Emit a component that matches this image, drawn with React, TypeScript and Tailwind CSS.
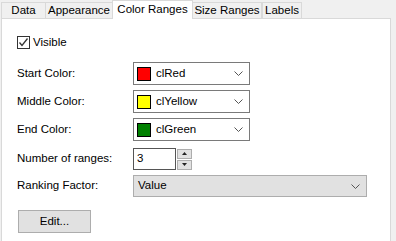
import React from 'react';

const font = { fontFamily: '"Liberation Sans", Arial, sans-serif' };

function Chevron() {
  return (
    <svg width="9" height="5" viewBox="0 0 9 5" className="shrink-0">
      <polyline points="0.5,0.5 4.5,4.5 8.5,0.5" fill="none" stroke="#555" strokeWidth="1" />
    </svg>
  );
}

function ColorCombo({ swatch, name }: { swatch: string; name: string }) {
  return (
    <div className="w-[117px] h-[23px] border border-[#7a7a7a] bg-white flex items-center pl-[3px] pr-[6px]">
      <span className="w-[14px] h-[14px] border border-black shrink-0" style={{ background: swatch }} />
      <span className="ml-[5px] flex-1 text-black">{name}</span>
      <Chevron />
    </div>
  );
}

const tabs = ['Data', 'Appearance', 'Color Ranges', 'Size Ranges', 'Labels'];
const tabWidths = ['w-[45px]', 'w-[66px]', 'w-[81px]', 'w-[69px]', 'w-[40px]'];

export default function App() {
  return (
    <div className="w-[396px] h-[241px] bg-[#f0f0f0] overflow-hidden text-[11.5px] text-black whitespace-nowrap" style={font}>
      {/* tab strip */}
      <div className="flex items-end h-[18px] pl-[1px]">
        {tabs.map((t, i) =>
          i === 2 ? (
            <div
              key={t}
              className={`${tabWidths[i]} h-[19px] -mb-px relative z-10 bg-white border border-b-0 border-[#d9d9d9] flex items-center justify-center`}
            >
              {t}
            </div>
          ) : (
            <div
              key={t}
              className={`${tabWidths[i]} h-[16px] bg-[#f0f0f0] border border-b-0 border-[#d9d9d9] flex items-center justify-center ${i === 1 || i === 3 ? 'border-l-0' : ''} ${i === 1 ? 'border-r-0' : ''}`}
            >
              {t}
            </div>
          )
        )}
      </div>

      {/* page */}
      <div className="ml-[1px] w-[390px] h-[240px] bg-white border border-[#d9d9d9] pl-[15px]">
        <div className="mt-[17px] flex items-center h-[13px]">
          <span className="w-[13px] h-[13px] border border-[#333] bg-white flex items-center justify-center">
            <svg width="11" height="11" viewBox="0 0 11 11">
              <polyline points="1.5,5.5 4,8.5 9.5,1.5" fill="none" stroke="#333" strokeWidth="1.3" />
            </svg>
          </span>
          <span className="ml-[3px]">Visible</span>
        </div>

        <div className="mt-[13px] grid grid-cols-[116px_auto] items-center gap-y-[5px]">
          <span>Start Color:</span>
          <ColorCombo swatch="#ff0000" name="clRed" />
          <span>Middle Color:</span>
          <ColorCombo swatch="#ffff00" name="clYellow" />
          <span>End Color:</span>
          <ColorCombo swatch="#008000" name="clGreen" />

          <span className="mt-[2px]">Number of ranges:</span>
          <div className="mt-[2px] flex items-center">
            <div className="w-[43px] h-[22px] border border-[#555] bg-white flex items-center pl-[3px]">3</div>
            <div className="ml-px flex flex-col gap-px">
              <div className="w-[15px] h-[10px] bg-[#e1e1e1] border border-[#adadad] flex items-center justify-center">
                <svg width="5" height="3" viewBox="0 0 5 3"><polygon points="2.5,0 5,3 0,3" fill="#222" /></svg>
              </div>
              <div className="w-[15px] h-[10px] bg-[#e1e1e1] border border-[#adadad] flex items-center justify-center">
                <svg width="5" height="3" viewBox="0 0 5 3"><polygon points="0,0 5,0 2.5,3" fill="#222" /></svg>
              </div>
            </div>
          </div>

          <span>Ranking Factor:</span>
          <div className="w-[234px] h-[22px] bg-[#e1e1e1] border border-[#adadad] flex items-center pl-[4px] pr-[6px]">
            <span className="flex-1">Value</span>
            <Chevron />
          </div>
        </div>

        <button className="mt-[13px] ml-[1px] w-[73px] h-[23px] bg-[#e1e1e1] border border-[#adadad] flex items-center justify-center">
          Edit...
        </button>
      </div>
    </div>
  );
}
